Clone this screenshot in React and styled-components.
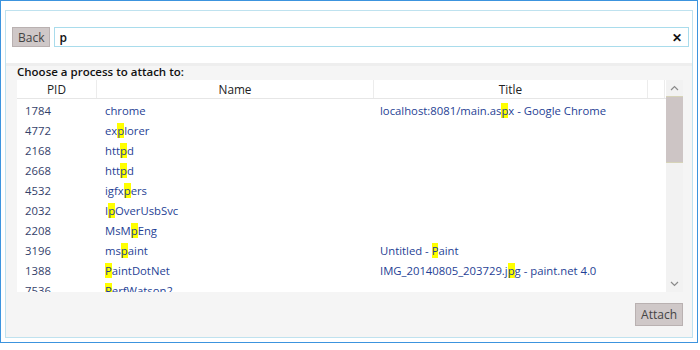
import styled, { createGlobalStyle } from "styled-components"

const GlobalStyle = createGlobalStyle`
    body{
        margin: 0;
        background: white;
        font-family: "Open Sans", "Noto Sans", sans-serif;
        font-size: 11.3px;
    }
`

const processes = [
    { pid: "1784", name: "chrome", title: "localhost:8081/main.aspx - Google Chrome" },
    { pid: "4772", name: "explorer", title: "" },
    { pid: "2168", name: "httpd", title: "" },
    { pid: "2668", name: "httpd", title: "" },
    { pid: "4532", name: "igfxpers", title: "" },
    { pid: "2032", name: "IpOverUsbSvc", title: "" },
    { pid: "2208", name: "MsMpEng", title: "" },
    { pid: "3196", name: "mspaint", title: "Untitled - Paint" },
    { pid: "1388", name: "PaintDotNet", title: "IMG_20140805_203729.jpg - paint.net 4.0" },
    { pid: "7536", name: "PerfWatson2", title: "" },
]

function Highlight({ text, query }){
    const i = text.toLowerCase().indexOf(query.toLowerCase())
    if (!text || i < 0) return text
    return (
        <>
            {text.slice(0, i)}
            <Mark>{text.slice(i, i + query.length)}</Mark>
            {text.slice(i + query.length)}
        </>
    )
}

export default function App(){
    const query = "p"
    return(
        <Window>
            <GlobalStyle />
            <Panel>
                <Toolbar>
                    <GrayButton>Back</GrayButton>
                    <SearchBox>
                        <span>{query}</span>
                        <Clear>✕</Clear>
                    </SearchBox>
                </Toolbar>
                <Body>
                    <Label>Choose a process to attach to:</Label>
                    <Table>
                        <List>
                            <HeaderRow>
                                <HeadCell width="80px">PID</HeadCell>
                                <HeadCell width="277px">Name</HeadCell>
                                <HeadCell width="274px">Title</HeadCell>
                                <HeadCell width="17px" />
                            </HeaderRow>
                            <Rows>
                                {processes.map(p => (
                                    <Row key={p.pid}>
                                        <PidCell>{p.pid}</PidCell>
                                        <NameCell><Highlight text={p.name} query={query} /></NameCell>
                                        <TitleCell><Highlight text={p.title} query={query} /></TitleCell>
                                    </Row>
                                ))}
                            </Rows>
                        </List>
                        <Scrollbar>
                            <Arrow>
                                <svg width="9" height="6" viewBox="0 0 9 6"><path d="M1 5 L4.5 1.5 L8 5" fill="none" stroke="#8a8a8a" strokeWidth="1.2"/></svg>
                            </Arrow>
                            <Track>
                                <Thumb />
                            </Track>
                            <Arrow>
                                <svg width="9" height="6" viewBox="0 0 9 6"><path d="M1 1 L4.5 4.5 L8 1" fill="none" stroke="#8a8a8a" strokeWidth="1.2"/></svg>
                            </Arrow>
                        </Scrollbar>
                    </Table>
                    <Footer>
                        <GrayButton big>Attach</GrayButton>
                    </Footer>
                </Body>
            </Panel>
        </Window>
    )
}

const Window = styled.div`
    width: 698px;
    height: 343px;
    box-sizing: border-box;
    border: 1px solid #3c94de;
    padding: 9px 4px 4px 4px;
    background: white;
`
const Panel = styled.div`
    height: 100%;
    box-sizing: border-box;
    border: 1px solid #bfe2ef;
    display: flex;
    flex-direction: column;
`
const Toolbar = styled.div`
    display: flex;
    align-items: center;
    gap: 4px;
    padding: 16px 3px 16px 6px;
    background: white;
`
const GrayButton = styled.div`
    height: ${props => props.big ? "23px" : "20px"};
    padding: 0 5px;
    box-sizing: border-box;
    background: #cfc8c8;
    border: 1px solid #b9b1b1;
    color: #444;
    font-size: 12px;
    display: flex;
    align-items: center;
    justify-content: center;
`
const SearchBox = styled.div`
    flex: 1;
    height: 20px;
    box-sizing: border-box;
    border: 1px solid #a9dcec;
    display: flex;
    align-items: center;
    justify-content: space-between;
    padding: 0 6px 0 4px;
    font-size: 12px;
    font-weight: 600;
    color: #111;
`
const Clear = styled.span`
    font-size: 12px;
    font-weight: 700;
    color: #111;
`
const Body = styled.div`
    flex: 1;
    background: #f5f5f5;
    border-top: 3px solid #eeeeee;
    display: flex;
    flex-direction: column;
    padding: 0 9px 0 11px;
`
const Label = styled.div`
    font-size: 11.5px;
    font-weight: 600;
    color: #111;
    height: 14px;
    line-height: 12px;
`
const Table = styled.div`
    display: flex;
    height: 212px;
`
const List = styled.div`
    flex: 1;
    background: white;
    overflow: hidden;
    display: flex;
    flex-direction: column;
`
const HeaderRow = styled.div`
    display: flex;
    height: 18px;
    border-bottom: 1px solid #e6e6e6;
    flex-shrink: 0;
`
const HeadCell = styled.div`
    width: ${props => props.width};
    box-sizing: border-box;
    border-right: 1px solid #ececec;
    text-align: center;
    line-height: 18px;
    color: #222;
    font-size: 11.8px;
`
const Rows = styled.div`
    padding-top: 1px;
`
const Row = styled.div`
    display: flex;
    height: 20px;
    align-items: center;
    white-space: nowrap;
`
const PidCell = styled.div`
    width: 80px;
    padding-left: 8px;
    box-sizing: border-box;
    color: #34416a;
`
const NameCell = styled.div`
    width: 277px;
    padding-left: 8px;
    box-sizing: border-box;
    color: #1f3f95;
`
const TitleCell = styled.div`
    padding-left: 6px;
    color: #1f3f95;
`
const Mark = styled.span`
    background: #ffff00;
`
const Scrollbar = styled.div`
    width: 17px;
    background: #f2f2f2;
    display: flex;
    flex-direction: column;
`
const Arrow = styled.div`
    height: 16px;
    display: flex;
    align-items: center;
    justify-content: center;
`
const Track = styled.div`
    flex: 1;
`
const Thumb = styled.div`
    height: 67px;
    background: #cdc5c5;
    border-top: 1px solid #d6d3b8;
    border-bottom: 1px solid #d6d3b8;
    box-sizing: border-box;
`
const Footer = styled.div`
    flex: 1;
    display: flex;
    justify-content: flex-end;
    align-items: center;
`
